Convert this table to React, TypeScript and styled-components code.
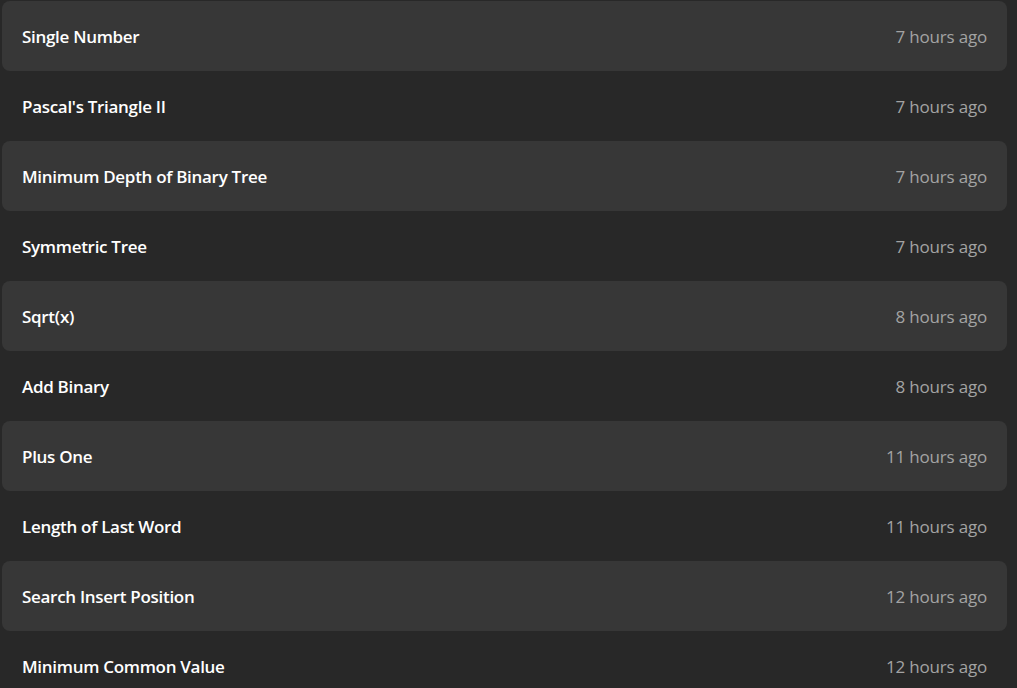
import React from "react";
import styled, { createGlobalStyle } from "styled-components";

const Global = createGlobalStyle`
  html, body { margin: 0; padding: 0; background: #282828; }
  body { font-family: "Open Sans", "Noto Sans", sans-serif; }
`;

const List = styled.div`
  display: flex;
  flex-direction: column;
  padding: 1px 10px 0 2px;
  height: 688px;
  overflow: hidden;
  box-sizing: border-box;
`;

const Row = styled.div<{ $alt: boolean }>`
  display: flex;
  align-items: center;
  justify-content: space-between;
  height: 70px;
  flex-shrink: 0;
  box-sizing: border-box;
  padding: 0 20px;
  border-radius: 8px;
  background: ${(p) => (p.$alt ? "#373737" : "transparent")};
`;

const Title = styled.span`
  color: #ffffff;
  font-size: 17px;
  font-weight: 600;
  letter-spacing: -0.3px;
`;

const Time = styled.span`
  color: #a3a3a3;
  font-size: 17px;
  font-weight: 400;
  letter-spacing: -0.2px;
`;

const items: [string, string][] = [
  ["Single Number", "7 hours ago"],
  ["Pascal's Triangle II", "7 hours ago"],
  ["Minimum Depth of Binary Tree", "7 hours ago"],
  ["Symmetric Tree", "7 hours ago"],
  ["Sqrt(x)", "8 hours ago"],
  ["Add Binary", "8 hours ago"],
  ["Plus One", "11 hours ago"],
  ["Length of Last Word", "11 hours ago"],
  ["Search Insert Position", "12 hours ago"],
  ["Minimum Common Value", "12 hours ago"],
];

export default function App() {
  return (
    <>
      <Global />
      <List>
        {items.map(([t, d], i) => (
          <Row key={i} $alt={i % 2 === 0}>
            <Title>{t}</Title>
            <Time>{d}</Time>
          </Row>
        ))}
      </List>
    </>
  );
}
